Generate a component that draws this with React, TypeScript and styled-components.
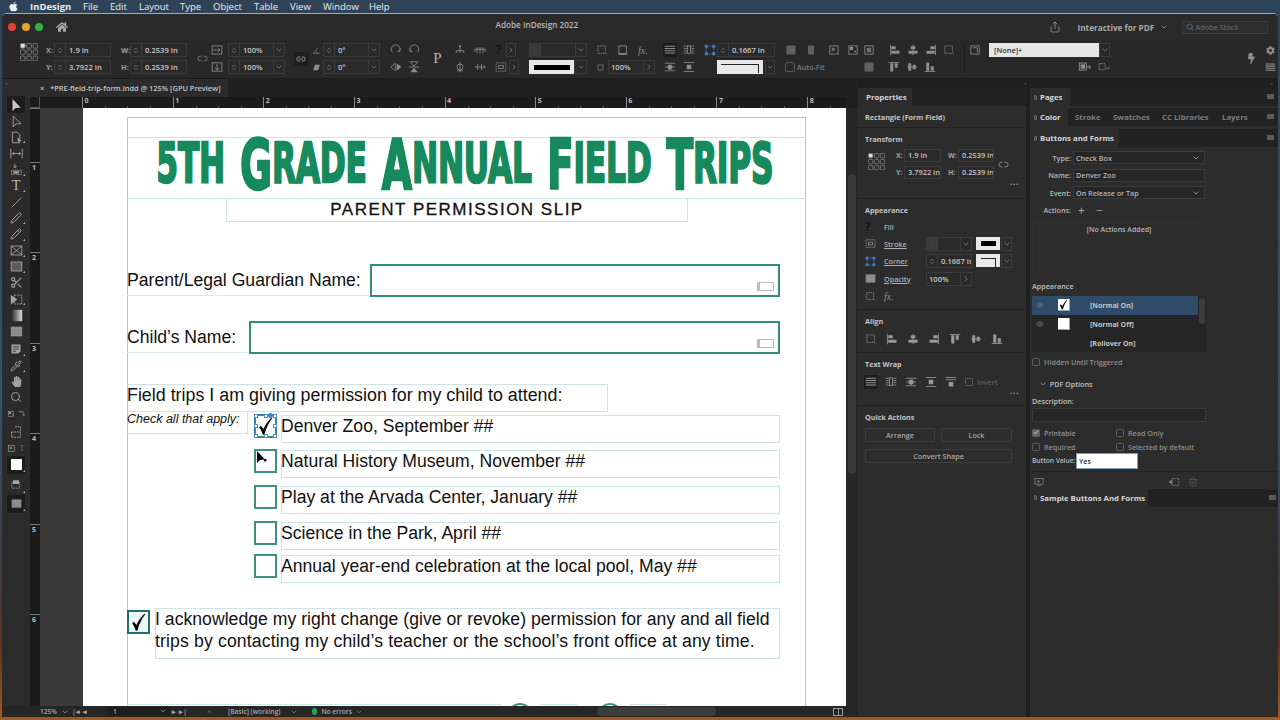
import React from "react";
import styled, { createGlobalStyle } from "styled-components";
import { FaApple, FaHome, FaCog, FaBolt, FaHandPaper } from "react-icons/fa";
import { Scissors, Pipette, Search, Pen, Pencil, Share, Eye, Trash2, ChevronDown, ChevronRight, ChevronUp, Unlink2, Link2, Check as TickMark } from "lucide-react";

const GlobalStyle = createGlobalStyle`
    html, body { margin: 0; padding: 0; width: 1280px; height: 720px; overflow: hidden; }
    body {
        font-family: "Open Sans", "Liberation Sans", sans-serif;
        background: linear-gradient(180deg, #2f4558 0, #33536f 400px, #3d3f4a 560px, #5a3320 640px, #a05a22 720px);
    }
    * { box-sizing: border-box; }
`;

const Screen = styled.div`
    width: 1280px;
    height: 720px;
    display: flex;
    flex-direction: column;
`;

const MenuBar = styled.div`
    height: 13px;
    display: flex;
    align-items: center;
    padding-left: 8px;
    color: #e9eef2;
    font-size: 9.5px;
    background: #2e4357;
`;

const MenuItem = styled.span<{ $w: number; $bold?: boolean }>`
    width: ${(p) => p.$w}px;
    font-weight: ${(p) => (p.$bold ? 700 : 500)};
    white-space: nowrap;
`;

const AppleMark = styled.span`
    width: 22px;
    display: flex;
    font-size: 11px;
    color: #eef2f5;
`;

const Win = styled.div`
    margin: 0 2px;
    height: 704px;
    border-top: 1px solid #8fb0c8;
    border-radius: 5px 5px 0 0;
    background: #1f1f1f;
    display: flex;
    flex-direction: column;
    overflow: hidden;
`;

const TitleBar = styled.div`
    height: 26px;
    flex: none;
    background: #2a2a2a;
    display: flex;
    align-items: center;
    position: relative;
    padding-left: 6px;
    color: #bdbdbd;
`;

const Light = styled.i<{ $c: string }>`
    width: 8px;
    height: 8px;
    border-radius: 50%;
    margin-right: 5.5px;
    background: ${(p) => p.$c};
`;

const HomeMark = styled.span`
    display: flex;
    margin-left: 7px;
    color: #a8a8a8;
    font-size: 12px;
`;

const AppName = styled.div`
    margin-left: 428px;
    margin-top: -5px;
    width: 200px;
    font-size: 8.2px;
    font-weight: 600;
    color: #b9b9b9;
`;

const ShareMark = styled.span`
    margin-left: 353px;
    display: flex;
    color: #a8a8a8;
`;

const Workspace = styled.span`
    margin-left: 17px;
    width: 90px;
    font-size: 8.2px;
    font-weight: 700;
    color: #a9a9a9;
    white-space: nowrap;
    display: flex;
    align-items: center;
    justify-content: space-between;
`;

const StockSearch = styled.div`
    margin-left: 14px;
    width: 86px;
    height: 13px;
    border: 1px solid #3a3a3a;
    background: #2e2e2e;
    display: flex;
    align-items: center;
    gap: 2px;
    padding-left: 3px;
    font-size: 7.4px;
    color: #6f6f6f;
    svg { color: #5e86b5; }
`;

const ControlBar = styled.div`
    height: 39px;
    flex: none;
    background: #282828;
    border-bottom: 1px solid #1c1c1c;
    padding: 3px 0 0 18px;
    display: flex;
    color: #8e8e8e;
`;

const Col = styled.div<{ $w: number; $mid?: boolean; $right?: boolean }>`
    width: ${(p) => p.$w}px;
    flex: none;
    display: flex;
    flex-direction: column;
    gap: 3px;
    align-items: ${(p) => (p.$right ? "flex-end" : p.$mid ? "center" : "flex-start")};
    justify-content: ${(p) => (p.$mid ? "center" : "flex-start")};
    height: 31px;
`;

const Sep = styled(Col)`
    border-right: 1px solid #1f1f1f;
`;

const Row = styled.div<{ $gap?: number; $pl?: number }>`
    height: 14px;
    display: flex;
    align-items: center;
    gap: ${(p) => p.$gap ?? 0}px;
    padding-left: ${(p) => p.$pl ?? 0}px;
`;

const FieldLabel = styled.span<{ $w: number }>`
    width: ${(p) => p.$w}px;
    font-size: 7.4px;
    font-weight: 700;
    color: #9f9f9f;
`;

const IconSlot = styled.span<{ $w: number }>`
    width: ${(p) => p.$w}px;
    flex: none;
    display: flex;
    color: #8e8e8e;
`;

const NumField = styled.div<{ $w: number; $dim?: boolean }>`
    width: ${(p) => p.$w}px;
    height: 14px;
    flex: none;
    display: flex;
    align-items: center;
    border: 1px solid #3b3b3b;
    background: #2a2a2a;
    font-size: 7.6px;
    font-weight: 600;
    color: ${(p) => (p.$dim ? "#666" : "#c6c6c6")};
    white-space: nowrap;
    overflow: hidden;
`;

const SpinBox = styled.span<{ $dim?: boolean }>`
    width: 11px;
    height: 100%;
    flex: none;
    margin-right: 3px;
    border-right: 1px solid #3b3b3b;
    display: flex;
    flex-direction: column;
    align-items: center;
    justify-content: center;
    color: ${(p) => (p.$dim ? "#4e4e4e" : "#a8a8a8")};
    background: ${(p) => (p.$dim ? "#3a3a3a" : "transparent")};
    svg { margin: -1.5px 0; }
`;

const Chev = styled.span`
    width: 11px;
    height: 100%;
    margin-left: auto;
    flex: none;
    border-left: 1px solid #3b3b3b;
    display: flex;
    align-items: center;
    justify-content: center;
    color: #8e8e8e;
`;

const Swatch = styled.div<{ $w: number; $h?: number }>`
    width: ${(p) => p.$w}px;
    height: ${(p) => p.$h ?? 14}px;
    flex: none;
    background: #e8e8e8;
    display: flex;
    align-items: center;
    justify-content: center;
`;

const BlackBar = styled.i<{ $w: number }>`
    width: ${(p) => p.$w}px;
    height: 5px;
    background: #000;
`;

const CornerMark = styled.i<{ $w: number }>`
    width: ${(p) => p.$w}px;
    height: 9px;
    border-top: 1px solid #222;
    border-right: 1px solid #222;
    margin-top: 3px;
`;

const ChevBox = styled.span<{ $w?: number }>`
    width: ${(p) => p.$w ?? 11}px;
    height: 14px;
    flex: none;
    border: 1px solid #3b3b3b;
    display: flex;
    align-items: center;
    justify-content: center;
    color: #8e8e8e;
`;

const ChainBtn = styled.span`
    width: 15px;
    height: 14px;
    background: #1e1e1e;
    border-radius: 2px;
    display: flex;
    align-items: center;
    justify-content: center;
    color: #a8a8a8;
`;

const SerifP = styled.span`
    font-family: "Liberation Serif", serif;
    font-size: 15px;
    color: #b4b4b4;
`;

const Fx = styled.span`
    font-family: "Liberation Serif", serif;
    font-style: italic;
    font-size: 10px;
    color: #8e8e8e;
`;

const Unknown = styled.span`
    font-size: 12px;
    font-weight: 700;
    color: #141414;
    line-height: 1;
`;

const Tick = styled.i`
    width: 10px;
    height: 10px;
    flex: none;
    border: 1px solid #5a5a5a;
    border-radius: 2px;
    display: block;
`;

const SmallText = styled.span<{ $c?: string }>`
    font-size: 7.2px;
    font-weight: 600;
    color: ${(p) => p.$c ?? "#7c7c7c"};
    white-space: nowrap;
`;

const StyleField = styled.div`
    width: 110px;
    height: 14px;
    background: #e6e6e6;
    color: #333;
    font-size: 7.4px;
    font-weight: 600;
    padding-left: 5px;
    display: flex;
    align-items: center;
`;

const Body = styled.div`
    flex: 1;
    min-height: 0;
    display: flex;
`;

const Left = styled.div`
    width: 856px;
    flex: none;
    display: flex;
    flex-direction: column;
`;

const LeftMain = styled.div`
    flex: 1;
    min-height: 0;
    display: flex;
`;

const ToolsCol = styled.div`
    width: 28px;
    flex: none;
    background: #2b2b2b;
    color: #a4a4a4;
    display: flex;
    flex-direction: column;
    align-items: center;
    padding-top: 8px;
    position: relative;
`;

const ToolsHandle = styled.div`
    height: 9px;
    font-size: 6px;
    color: #6c6c6c;
    letter-spacing: -1px;
    align-self: flex-start;
    padding-left: 3px;
    margin-top: -8px;
    margin-bottom: 8px;
`;

const Tool = styled.div<{ $h?: number; $active?: boolean; $corner?: boolean }>`
    width: 18px;
    height: ${(p) => p.$h ?? 16.2}px;
    flex: none;
    display: flex;
    align-items: center;
    justify-content: center;
    gap: 3px;
    position: relative;
    background: ${(p) => (p.$active ? "#1c1c1c" : "transparent")};
    &::after {
        content: "";
        display: ${(p) => (p.$corner ? "block" : "none")};
        position: absolute;
        right: 0;
        bottom: 2px;
        border-left: 2px solid transparent;
        border-bottom: 2px solid #bbb;
    }
`;

const ToolT = styled.span<{ $size?: number; $c?: string }>`
    font-family: "Liberation Serif", serif;
    font-size: ${(p) => p.$size ?? 15}px;
    color: ${(p) => p.$c ?? "#b4b4b4"};
    line-height: 1;
`;

const FillChip = styled.i`
    width: 11px;
    height: 11px;
    background: #fff;
    display: block;
`;

const DocCol = styled.div`
    flex: 1;
    min-width: 0;
    display: flex;
    flex-direction: column;
`;

const TabStrip = styled.div`
    height: 18px;
    flex: none;
    background: #202020;
    display: flex;
`;

const DocTab = styled.div`
    width: 198px;
    height: 100%;
    background: #2b2b2b;
    color: #c4c4c4;
    font-size: 7.4px;
    font-weight: 600;
    display: flex;
    align-items: center;
    gap: 6px;
    padding-left: 10px;
    white-space: nowrap;
`;

const HRuler = styled.div`
    height: 11px;
    flex: none;
    margin-right: 12px;
    background: #1b1b1b;
    display: flex;
    padding-left: 52px;
    position: relative;
    overflow: hidden;
`;

const RulerCorner = styled.span`
    position: absolute;
    left: 0;
    top: 0;
    width: 10px;
    height: 11px;
    border-right: 1px solid #555;
    border-bottom: 1px solid #555;
`;

const HCell = styled.div`
    width: 90.65px;
    flex: none;
    height: 11px;
    border-left: 1px solid #8a8a8a;
    padding-left: 1.5px;
    font-size: 7px;
    font-weight: 700;
    line-height: 8px;
    color: #bdbdbd;
    background:
        repeating-linear-gradient(90deg, transparent 0, transparent 21.7px, #555 21.7px, #555 22.7px) 0 100% / 100% 2px no-repeat;
`;

const DocMain = styled.div`
    flex: 1;
    min-height: 0;
    display: flex;
`;

const VRuler = styled.div`
    width: 10px;
    flex: none;
    background: #1b1b1b;
    overflow: hidden;
    margin-top: 0;
`;

const VCell = styled.div<{ $first?: boolean }>`
    height: ${(p) => (p.$first ? 54 : 90.4)}px;
    border-top: 1px solid #777;
    padding-left: 2px;
    font-size: 7px;
    font-weight: 700;
    line-height: 10px;
    color: #bdbdbd;
`;

const Pasteboard = styled.div`
    width: 43px;
    flex: none;
    background: #3a3a3a;
`;

const Sheet = styled.div`
    width: 763px;
    flex: none;
    background: #fff;
    padding: 9px 0 0 44px;
    overflow: hidden;
    color: #111;
    font-family: "Liberation Sans", Arial, sans-serif;
`;

const Margins = styled.div`
    display: flow-root;
    width: 679px;
    min-height: 640px;
    box-shadow: inset 1px 1px 0 #d9aee4, inset -1px 0 0 #d9aee4;
`;

const TitleFrame = styled.div`
    margin-top: 20px;
    height: 62px;
    border-top: 1px solid #cfe3ea;
    border-bottom: 1px solid #cfe3ea;
    display: flex;
    justify-content: center;
    align-items: center;
`;

const Title = styled.div`
    font-family: "DejaVu Sans", sans-serif;
    font-weight: 700;
    color: #168a5c;
    font-size: 56px;
    line-height: 62px;
    white-space: nowrap;
    transform: translate(-2px, -5px) scaleX(0.56);
    -webkit-text-stroke: 2.4px #168a5c;
    letter-spacing: -0.5px;
    word-spacing: 8px;
`;

const BigCap = styled.span`
    font-size: 70px;
    line-height: 0;
    vertical-align: -7px;
`;

const SubFrame = styled.div`
    margin-left: 99px;
    width: 462px;
    height: 23px;
    border: 1px solid #cfe3ea;
    border-top: 0;
    text-align: center;
    font-size: 17px;
    line-height: 21px;
    letter-spacing: 1.5px;
    -webkit-text-stroke: 0.3px #111;
`;

const FormRow = styled.div<{ $mt: number }>`
    margin-top: ${(p) => p.$mt}px;
    display: flex;
    align-items: flex-start;
`;

const LabelFrame = styled.div<{ $w: number; $h?: number; $size?: number }>`
    width: ${(p) => p.$w}px;
    height: ${(p) => p.$h ?? 32}px;
    flex: none;
    font-size: ${(p) => p.$size ?? 17.6}px;
    line-height: ${(p) => p.$h ?? 32}px;
    white-space: nowrap;
    border-bottom: 1px solid #dbeaef;
`;

const TextField = styled.div<{ $w: number }>`
    width: ${(p) => p.$w}px;
    height: 33px;
    flex: none;
    border: 2px solid #2f8f7b;
    position: relative;
    &::after {
        content: "";
        position: absolute;
        right: 4px;
        bottom: 4px;
        width: 13px;
        height: 7px;
        border: 1px solid #bbb;
        border-left-width: 3px;
    }
`;

const TripsHeading = styled.div`
    margin-top: 30px;
    width: 481px;
    height: 28px;
    border: 1px solid #cfe3ea;
    border-left: 0;
    font-size: 17.85px;
    line-height: 21px;
    white-space: nowrap;
`;

const ChecksArea = styled.div`
    display: flex;
`;

const CheckHint = styled.div`
    width: 121px;
    height: 22px;
    margin-right: 6px;
    flex: none;
    border: 1px solid #cfe3ea;
    border-width: 0 1px 1px 0;
    font-size: 12.5px;
    line-height: 14px;
    font-style: italic;
    white-space: nowrap;
`;

const ChecksList = styled.div`
    display: flex;
    flex-direction: column;
    margin-top: 2px;
`;

const CheckRow = styled.div<{ $h: number }>`
    height: ${(p) => p.$h}px;
    display: flex;
    gap: 4px;
    align-items: flex-start;
`;

const Box = styled.div`
    width: 23px;
    height: 24px;
    flex: none;
    border: 2px solid #3d8f80;
    position: relative;
    display: flex;
    align-items: center;
    justify-content: center;
`;

const Selection = styled.div`
    position: absolute;
    inset: -2px -2px -2px -2px;
    border: 1px dashed #2b6fb3;
`;

const Handle = styled.i<{ $x: string; $y: string }>`
    position: absolute;
    left: ${(p) => p.$x};
    top: ${(p) => p.$y};
    width: 4px;
    height: 4px;
    margin: -2px;
    background: #fff;
    border: 1px solid #4d8fd0;
`;

const HandleDot = styled.i`
    position: absolute;
    right: 2px;
    top: -3px;
    width: 5px;
    height: 5px;
    border-radius: 50%;
    background: #3d83d4;
`;

const CursorMark = styled.svg`
    position: absolute;
    left: 0;
    top: -1px;
`;

const OptionFrame = styled.div`
    width: 499px;
    height: 28px;
    flex: none;
    margin-top: 1px;
    border: 1px solid #cfe3ea;
    border-left-width: 0;
    box-shadow: inset 1px 0 0 #cfe3ea;
    font-size: 17.6px;
    line-height: 20px;
    white-space: nowrap;
`;

const AckRow = styled.div`
    margin-top: 25px;
    display: flex;
    gap: 5px;
`;

const AckBox = styled(Box)`
    margin-top: 2px;
    border-color: #1f6f6a;
    background: #eef6f5;
`;

const AckFrame = styled.div`
    width: 625px;
    height: 51px;
    border: 1px solid #cfe3ea;
    border-left-width: 0;
    box-shadow: inset 1px 0 0 #cfe3ea;
    font-size: 17.6px;
    line-height: 21.5px;
`;

const AckLine = styled.div<{ $ls: number }>`
    letter-spacing: ${(p) => p.$ls}px;
    white-space: nowrap;
`;

const SigRow = styled.div`
    margin-top: 45px;
    display: flex;
    height: 30px;
`;

const SigLine = styled.div`
    width: 375px;
    border-top: 1px solid #cfe3ea;
`;

const SigCircle = styled.div`
    width: 24px;
    height: 24px;
    flex: none;
    margin: -1px 0 0 6px;
    border: 2px solid #2f8f7b;
    border-radius: 50%;
`;

const SigBox = styled.div`
    width: 37px;
    margin: 0 15px 0 8px;
    border-top: 1px solid #cfe3ea;
`;

const VScroll = styled.div`
    width: 12px;
    flex: none;
    background: #262626;
    padding: 66px 2px 250px;
`;

const ScrollThumb = styled.div`
    width: 8px;
    height: 300px;
    border-radius: 4px;
    background: #3a3a3a;
`;

const StatusBar = styled.div`
    height: 11px;
    flex: none;
    background: #262626;
    display: flex;
    align-items: center;
    padding-left: 38px;
    font-size: 6.6px;
    font-weight: 600;
    color: #a6a6a6;
    white-space: nowrap;
`;

const StatusSlot = styled.span<{ $w: number }>`
    width: ${(p) => p.$w}px;
    flex: none;
    display: flex;
    align-items: center;
    gap: 4px;
`;

const StatusPage = styled.span`
    width: 62px;
    flex: none;
    height: 9px;
    background: #1e1e1e;
    padding-left: 5px;
    line-height: 9px;
    display: flex;
    justify-content: space-between;
    padding-right: 3px;
`;

const GreenDot = styled.i`
    width: 7px;
    height: 7px;
    border-radius: 50%;
    background: #27a844;
`;

const HThumb = styled.div`
    width: 119px;
    height: 9px;
    flex: none;
    border-radius: 4px;
    background: #3c3c3c;
`;

const SpreadMark = styled.span`
    width: 10px;
    height: 8px;
    flex: none;
    border: 1px solid #9a9a9a;
    margin-left: 117px;
    position: relative;
    &::after {
        content: "";
        position: absolute;
        left: 3.5px;
        top: 0;
        bottom: 0;
        border-left: 1px solid #9a9a9a;
    }
`;

const Dock = styled.div`
    flex: 1;
    background: #1e1e1e;
    display: flex;
    flex-direction: column;
`;

const DockHandle = styled.div`
    height: 9px;
    flex: none;
    font-size: 6px;
    color: #6c6c6c;
    letter-spacing: -1px;
    line-height: 9px;
    display: flex;
    padding-left: 166px;
    justify-content: space-between;
    padding-right: 6px;
`;

const DockCols = styled.div`
    flex: 1;
    min-height: 0;
    display: flex;
    gap: 4px;
`;

const PanelCol = styled.div<{ $w?: number }>`
    width: ${(p) => (p.$w ? `${p.$w}px` : "auto")};
    flex: ${(p) => (p.$w ? "none" : "1")};
    display: flex;
    flex-direction: column;
    background: #2c2c2c;
`;

const PanelTabs = styled.div<{ $mb?: number }>`
    height: 18px;
    flex: none;
    background: #222;
    margin-bottom: ${(p) => p.$mb ?? 0}px;
    display: flex;
    align-items: center;
    font-size: 7.8px;
    font-weight: 700;
    color: #7d7d7d;
    position: relative;
`;

const PanelTab = styled.div<{ $w: number; $on?: boolean; $ml?: number }>`
    width: ${(p) => p.$w}px;
    flex: none;
    height: 100%;
    margin-left: ${(p) => p.$ml ?? 0}px;
    display: flex;
    align-items: center;
    padding-left: ${(p) => (p.$on ? 4 : 0)}px;
    gap: 3px;
    white-space: nowrap;
    background: ${(p) => (p.$on ? "#2c2c2c" : "transparent")};
    color: ${(p) => (p.$on ? "#d6d6d6" : "#7d7d7d")};
`;

const GripDot = styled.i`
    width: 3px;
    height: 5px;
    border: 1px solid #777;
    border-radius: 50%;
    flex: none;
`;

const PanelMenu = styled.span`
    position: absolute;
    right: 4px;
    top: 6px;
    width: 7px;
    height: 5px;
    background: #5b5b5b;
`;

const PropTab = styled(PanelTab)`
    padding-left: 8px;
`;

const Section = styled.div<{ $h: number; $last?: boolean }>`
    height: ${(p) => p.$h}px;
    flex: none;
    padding: 6px 7px 0;
    border-bottom: ${(p) => (p.$last ? "0" : "1px solid #232323")};
    position: relative;
`;

const SectionTitle = styled.div`
    font-size: 7.2px;
    font-weight: 700;
    color: #c4c4c4;
    height: 10px;
    line-height: 10px;
`;

const ShapeName = styled(SectionTitle)`
    padding-top: 0;
`;

const TransformGrid = styled.div`
    display: grid;
    grid-template-columns: 28px 8px 37px 17px 36px 16px;
    grid-auto-rows: 13px;
    row-gap: 4px;
    align-items: center;
    margin: 5px 0 0 0;
    padding-left: 3px;
`;

const ProxyCell = styled.div`
    grid-row: span 2;
`;

const PlainField = styled.div`
    height: 13px;
    border: 1px solid #3b3b3b;
    background: #2a2a2a;
    font-size: 7.4px;
    font-weight: 600;
    color: #c2c2c2;
    padding-left: 3px;
    line-height: 11px;
    white-space: nowrap;
    overflow: hidden;
`;

const TLabel = styled.span`
    font-size: 7px;
    font-weight: 700;
    color: #a5a5a5;
`;

const TLabelW = styled(TLabel)`
    padding-left: 7px;
`;

const LinkCell = styled.div`
    grid-column: 6;
    grid-row: 1 / span 2;
    padding-left: 4px;
    color: #8e8e8e;
    display: flex;
`;

const More = styled.div`
    position: absolute;
    right: 7px;
    font-size: 9px;
    font-weight: 700;
    letter-spacing: 0.5px;
    line-height: 5px;
    color: #9a9a9a;
`;

const PropRows = styled.div`
    margin-top: 3px;
`;

const PropRow = styled.div<{ $h: number }>`
    height: ${(p) => p.$h}px;
    display: flex;
    align-items: center;
`;

const PropIcon = styled.span`
    width: 19px;
    flex: none;
    display: flex;
    color: #9a9a9a;
    padding-left: 0;
`;

const PropLink = styled.span<{ $plain?: boolean }>`
    width: 42px;
    flex: none;
    font-size: 7.2px;
    font-weight: 600;
    color: #b0b0b0;
    text-decoration: ${(p) => (p.$plain ? "none" : "underline")};
`;

const SwatchGroup = styled.div`
    margin-left: 4px;
    display: flex;
    gap: 1px;
`;

const AlignRow = styled.div<{ $gap: number }>`
    display: flex;
    align-items: center;
    margin-top: 7px;
    gap: ${(p) => p.$gap}px;
    color: #999;
`;

const WrapOn = styled.span`
    background: #1c1c1c;
    display: flex;
    padding: 1px;
    margin: -1px;
`;

const ActionBtns = styled.div`
    margin-top: 6px;
    display: grid;
    grid-template-columns: 70px 71px;
    column-gap: 6px;
    row-gap: 7px;
    padding-right: 0;
`;

const ActionBtn = styled.div<{ $wide?: boolean }>`
    grid-column: ${(p) => (p.$wide ? "1 / span 2" : "auto")};
    height: 14px;
    border: 1px solid #3e3e3e;
    border-radius: 2px;
    text-align: center;
    font-size: 7.2px;
    font-weight: 600;
    line-height: 12px;
    color: #a8a8a8;
`;

const FormsBody = styled.div`
    padding: 4px 0 0 2px;
    width: 176px;
    flex: 1;
`;

const KV = styled.div`
    height: 13px;
    margin-bottom: 4.5px;
    display: flex;
    align-items: center;
`;

const KVLabel = styled.span`
    width: 41px;
    margin-right: 0;
    text-align: right;
    padding-right: 2px;
    font-size: 7.2px;
    font-weight: 600;
    color: #b6b6b6;
    flex: none;
`;

const KVField = styled.div`
    width: 132px;
    height: 13px;
    border: 1px solid #3b3b3b;
    background: #262626;
    padding: 0 4px 0 2px;
    font-size: 7.2px;
    font-weight: 600;
    color: #b4b4b4;
    display: flex;
    align-items: center;
    justify-content: space-between;
`;

const ActionsRow = styled(KV)`
    margin-bottom: 5px;
    color: #a8a8a8;
`;

const ActionSigns = styled.span`
    display: flex;
    gap: 11px;
    padding-left: 5px;
    font-size: 12px;
    line-height: 13px;
`;

const ActionsBox = styled.div`
    width: 174px;
    height: 53px;
    border: 1px solid #2f2f2f;
    text-align: center;
    font-size: 7px;
    font-weight: 600;
    line-height: 14px;
    color: #b6b6b6;
`;

const GroupLabel = styled.div<{ $mt: number; $mb: number }>`
    margin-top: ${(p) => p.$mt}px;
    margin-bottom: ${(p) => p.$mb}px;
    height: 10px;
    line-height: 10px;
    font-size: 7.2px;
    font-weight: 600;
    color: #c0c0c0;
    display: flex;
    align-items: center;
    gap: 3px;
`;

const StateList = styled.div`
    width: 174px;
    height: 56px;
    background: #252525;
    position: relative;
    overflow: hidden;
`;

const StateRow = styled.div<{ $on?: boolean }>`
    height: 19px;
    display: flex;
    align-items: center;
    padding-left: 4px;
    font-size: 7px;
    font-weight: 700;
    color: #c4c4c4;
    background: ${(p) => (p.$on ? "#2f4b68" : "transparent")};
    width: 166px;
`;

const EyeSlot = styled.span`
    width: 22px;
    display: flex;
    color: #6f7f8c;
`;

const StateChip = styled.span<{ $blank?: boolean }>`
    width: 12px;
    height: 12px;
    margin-right: 20px;
    flex: none;
    background: ${(p) => (p.$blank ? "transparent" : "#fff")};
    border-right: ${(p) => (p.$blank ? "0" : "1px solid #7fb0a8")};
    border-bottom: ${(p) => (p.$blank ? "0" : "1px solid #7fb0a8")};
    display: flex;
    align-items: center;
    justify-content: center;
`;

const StateScroll = styled.div`
    position: absolute;
    right: 1px;
    top: 2px;
    width: 6px;
    height: 26px;
    border-radius: 3px;
    background: #3d3d3d;
`;

const CheckLine = styled.div<{ $mt: number }>`
    margin-top: ${(p) => p.$mt}px;
    height: 10px;
    display: flex;
    align-items: center;
    gap: 4px;
    font-size: 7.2px;
    font-weight: 600;
    color: #8d8d8d;
`;

const MiniBox = styled.i<{ $on?: boolean }>`
    width: 8px;
    height: 8px;
    flex: none;
    display: flex;
    align-items: center;
    justify-content: center;
    border: 1px solid #5e5e5e;
    border-radius: 1.5px;
    color: #ddd;
    background: ${(p) => (p.$on ? "#6a6a6a" : "transparent")};
`;

const CheckCell = styled.span<{ $w: number }>`
    width: ${(p) => p.$w}px;
    display: flex;
    align-items: center;
    gap: 4px;
    flex: none;
`;

const DescField = styled.div`
    width: 174px;
    height: 14px;
    border: 1px solid #3b3b3b;
    background: #262626;
`;

const ValueRow = styled.div`
    margin-top: 2px;
    height: 14px;
    display: flex;
    align-items: center;
    font-size: 6.6px;
    font-weight: 600;
    color: #bcbcbc;
`;

const ValueLabel = styled.span`
    width: 45px;
    flex: none;
    white-space: nowrap;
`;

const ValueInput = styled.div`
    width: 60px;
    height: 14px;
    background: #fff;
    box-shadow: 0 0 0 1px #7a9cc0;
    color: #333;
    font-size: 7.2px;
    line-height: 14px;
    padding-left: 2px;
`;

const FootBar = styled.div`
    margin: 3px 0 0 -2px;
    width: 250px;
    height: 18px;
    border-top: 1px solid #262626;
    padding: 3px 0 0 4px;
    display: flex;
    align-items: center;
    color: #8e8e8e;
    gap: 0;
`;

const FootIcon = styled.span<{ $ml?: number }>`
    margin-left: ${(p) => p.$ml ?? 0}px;
    display: flex;
`;

const SamplePanel = styled(PanelTabs)`
    margin-left: -2px;
    width: 250px;
`;

type IconName =
    | "rotR" | "rotL" | "flipH" | "flipV" | "scaleX" | "scaleY" | "angle" | "shear"
    | "orgA" | "orgB" | "orgC" | "orgD" | "strokeBox" | "frame" | "shadow" | "square"
    | "wrap0" | "wrap1" | "wrap2" | "wrap3" | "wrap4" | "corners" | "fit1" | "fit2" | "fit3" | "fit4" | "fit5"
    | "alignL" | "alignC" | "alignR" | "alignT" | "alignM" | "alignB" | "dist"
    | "arrow" | "arrowO" | "page" | "gap" | "collect" | "line" | "boxX" | "rect" | "free" | "grad" | "feather" | "note"
    | "swap" | "view" | "play" | "screen" | "swatchA" | "swatchB" | "preview" | "noteGrid";

const filled = { fill: "currentColor", stroke: "none" };

const shapes: Record<IconName, React.ReactNode> = {
    rotR: <><path d="M3 11a6 6 0 1 1 10-1" /><path d="M13 6v4h-3" /></>,
    rotL: <><path d="M13 11a6 6 0 1 0-10-1" /><path d="M3 6v4h3" /></>,
    flipH: <><path d="M7 3L1 8l6 5z" /><path d="M9 3l6 5-6 5z" {...filled} /></>,
    flipV: <><path d="M3 1h10L8 7z" /><path d="M3 15h10L8 9z" {...filled} /><path d="M1 8h14" /></>,
    scaleX: <><rect x="1.5" y="2.5" width="13" height="11" /><path d="M3 8h9M9 5l3 3-3 3" /></>,
    scaleY: <><rect x="1.5" y="2.5" width="13" height="11" /><path d="M8 4v8M5 9l3 3 3-3" /></>,
    angle: <path d="M2 13h12M2 13L10 3M7 8l3 5" />,
    shear: <path d="M5 3h9l-3 10H2z" {...filled} />,
    orgA: <><circle cx="8" cy="3" r="1.5" {...filled} /><path d="M8 4v8M3 9h10M3 9v3M13 9v3" /></>,
    orgB: <path d="M1 10V7h14v3M4 7V4M8 7V4M12 7V4M4 7v5M8 7v5M12 7v5" />,
    orgC: <><circle cx="8" cy="8" r="4" /><path d="M8 1v14M4 13h8" /></>,
    orgD: <path d="M1 8h14M5 4v8M10 4v8M13 6l2 2-2 2" />,
    strokeBox: <><rect x="1.5" y="2.5" width="13" height="11" strokeDasharray="2 1" /><rect x="5" y="6" width="6" height="4" /></>,
    frame: <><rect x="2.5" y="2.5" width="10" height="10" strokeDasharray="2 1" /><path d="M14 13h1" /></>,
    shadow: <><rect x="2.5" y="2.5" width="10" height="10" /><path d="M2 14h12" /></>,
    square: <rect x="3.5" y="3.5" width="9" height="9" />,
    wrap0: <path d="M1 3h14M1 6h14M1 9h14M1 12h14" strokeWidth="1.5" />,
    wrap1: <><path d="M1 3h4M1 6h4M1 9h4M1 12h4M11 3h4M11 6h4M11 9h4M11 12h4" /><rect x="6" y="2.5" width="4" height="10" /></>,
    wrap2: <><path d="M1 3h14M1 13h14M1 8h3M12 8h3" /><circle cx="8" cy="8" r="3.5" {...filled} /></>,
    wrap3: <><path d="M1 2h14M1 14h14" /><rect x="5" y="5" width="6" height="6" {...filled} /></>,
    wrap4: <><path d="M1 2h14M1 5h14" /><rect x="5" y="8" width="6" height="6" {...filled} /></>,
    corners: <><rect x="3" y="3" width="10" height="10" stroke="#3f7fc0" strokeDasharray="3 1" /><path d="M1 1h4v4H1zM11 1h4v4h-4zM1 11h4v4H1zM11 11h4v4h-4z" fill="#3f7fc0" stroke="none" /></>,
    fit1: <path d="M2 2h12v12H2z" {...filled} opacity=".55" />,
    fit2: <path d="M4 2h8v12H4z" {...filled} opacity=".55" />,
    fit3: <><rect x="2.5" y="2.5" width="11" height="11" /><rect x="5" y="5" width="4" height="4" {...filled} opacity=".7" /></>,
    fit4: <><rect x="2.5" y="2.5" width="11" height="11" /><rect x="4" y="4" width="4" height="4" {...filled} /><rect x="10" y="9" width="2" height="2" {...filled} /></>,
    fit5: <><rect x="2.5" y="2.5" width="11" height="11" /><rect x="5" y="5" width="6" height="6" {...filled} opacity=".7" /></>,
    alignL: <><path d="M2 1v14" /><rect x="3" y="3" width="6" height="4" {...filled} /><rect x="3" y="9" width="11" height="4" {...filled} /></>,
    alignC: <><path d="M8 1v14" /><rect x="5" y="3" width="6" height="4" {...filled} /><rect x="2" y="9" width="12" height="4" {...filled} /></>,
    alignR: <><path d="M14 1v14" /><rect x="7" y="3" width="6" height="4" {...filled} /><rect x="2" y="9" width="11" height="4" {...filled} /></>,
    alignT: <><path d="M1 2h14" /><rect x="3" y="3" width="4" height="11" {...filled} /><rect x="9" y="3" width="4" height="6" {...filled} /></>,
    alignM: <><path d="M1 8h14" /><rect x="3" y="3" width="4" height="10" {...filled} /><rect x="9" y="5" width="4" height="6" {...filled} /></>,
    alignB: <><path d="M1 14h14" /><rect x="3" y="2" width="4" height="11" {...filled} /><rect x="9" y="7" width="4" height="6" {...filled} /></>,
    dist: <><rect x="2.5" y="2.5" width="10" height="10" strokeDasharray="2 1" /><path d="M13 14l2 0-1 1z" {...filled} /></>,
    arrow: <path d="M4 1v14l3.5-3.5 6-.5z" fill="#c8c8c8" stroke="none" />,
    arrowO: <path d="M4 1.5v13l3.5-3.5 6-.5z" />,
    page: <><path d="M3 1.5h6l3 3v10H3z" /><path d="M9 8l5 4-3 .5-1 2z" {...filled} /></>,
    gap: <path d="M1 2v12M15 2v12M3 8h10M5 6L3 8l2 2M11 6l2 2-2 2" />,
    collect: <><path d="M2 14V9h12v5z" strokeDasharray="2 1" /><path d="M6 1v5M4 4l2 2 2-2" /><rect x="4" y="10" width="7" height="3" {...filled} /></>,
    line: <path d="M2 14L14 2" />,
    boxX: <><rect x="1.5" y="2.5" width="13" height="11" /><path d="M1.5 2.5l13 11M14.5 2.5l-13 11" /></>,
    rect: <rect x="1.5" y="2.5" width="13" height="11" fill="#5a5a5a" />,
    free: <><path d="M1 2l8 6-8 6z" {...filled} /><rect x="5.5" y="2.5" width="9" height="11" strokeDasharray="2 1" /></>,
    grad: <><defs><linearGradient id="g1"><stop offset="0" stopColor="#222" /><stop offset="1" stopColor="#ddd" /></linearGradient></defs><rect x="1" y="1" width="14" height="14" fill="url(#g1)" stroke="none" /></>,
    feather: <><defs><pattern id="p1" width="4" height="4" patternUnits="userSpaceOnUse"><rect width="4" height="4" fill="#666" /><rect width="2" height="2" fill="#333" /></pattern></defs><rect x="1" y="2" width="14" height="12" fill="url(#p1)" stroke="none" /></>,
    note: <><path d="M2 2h12v9l-3 3H2z" {...filled} /><path d="M4 5h8M4 8h8M4 11h4" stroke="#2b2b2b" /></>,
    swap: <path d="M3 4h7a3 3 0 0 1 3 3v5M11 10l2 3 2-3M5 2L3 4l2 2" strokeWidth="1.4" />,
    view: <><rect x="2.5" y="5.5" width="10" height="8" strokeDasharray="2 1" /><rect x="4" y="3" width="8" height="5" {...filled} /></>,
    play: <><rect x="1.5" y="2.5" width="13" height="9" /><path d="M6 5l4 2-4 2z" {...filled} /><path d="M5 14h6" /></>,
    screen: <><path d="M1 8l4-3v6z" {...filled} /><rect x="5.5" y="3.5" width="9" height="9" strokeDasharray="2 1" /></>,
    swatchA: <><rect x="1.5" y="3.5" width="8" height="8" /><rect x="3" y="5" width="5" height="5" {...filled} /><path d="M10 8h4l-1-2M14 8l-1 2" /></>,
    swatchB: <><rect x="1.5" y="3.5" width="8" height="8" strokeDasharray="2 1" /><path d="M11 9l2 2 2-3" /></>,
    preview: <><rect x="2.5" y="2.5" width="11" height="11" /><path d="M5 5h6v6" /></>,
    noteGrid: <><path d="M7 2h6v6" strokeDasharray="2 1" /><rect x="3" y="8" width="10" height="6" strokeDasharray="2 1" /></>,
};

const Icon = ({ n, s = 12 }: { n: IconName; s?: number }) => (
    <svg width={s} height={s} viewBox="0 0 16 16" fill="none" stroke="currentColor" strokeWidth="1.1">
        {shapes[n]}
    </svg>
);

const ProxyGrid = ({ s = 18 }: { s?: number }) => (
    <svg width={s} height={s} viewBox="0 0 18 18">
        {[0, 6.3, 12.6].map((y) =>
            [0, 6.3, 12.6].map((x) =>
                <rect key={`${x}-${y}`} x={x + 0.5} y={y + 0.5} width="4.6" height="4.6" rx="1" fill={x + y === 0 ? "#ddd" : "none"} stroke="#777" />
            )
        )}
    </svg>
);

const Check = ({ s = 24 }: { s?: number }) => (
    <svg width={s} height={s} viewBox="0 0 24 24">
        <path d="M4 13.5l2.2-1.8 3.2 4.2C12 10 15 5.5 19.5 1.5l1 .8C16 8 13 14.5 10.5 23H8.6C7.6 19.5 6 16.5 4 13.5z" fill="#000" />
    </svg>
);

const Spin = ({ dim }: { dim?: boolean }) => (
    <SpinBox $dim={dim}>
        <ChevronUp size={6} strokeWidth={2} />
        <ChevronDown size={6} strokeWidth={2} />
    </SpinBox>
);

const ChevD = () => <ChevronDown size={8} strokeWidth={2} />;
const ChevR = () => <ChevronRight size={8} strokeWidth={2} />;

const Num = ({ w = 57, v, menu }: { w?: number; v: string; menu?: boolean }) => (
    <NumField $w={w}>
        <Spin />
        {v}
        {menu && <Chev><ChevD /></Chev>}
    </NumField>
);

const HANDLES: [string, string][] = [
    ["0", "0"], ["50%", "0"], ["100%", "0"], ["0", "50%"], ["100%", "50%"], ["0", "100%"], ["50%", "100%"], ["100%", "100%"],
];

const menus: [string, number][] = [
    ["File", 27], ["Edit", 29], ["Layout", 41], ["Type", 33], ["Object", 41], ["Table", 36], ["View", 33], ["Window", 46], ["Help", 30],
];

const App = () => (
    <Screen>
        <GlobalStyle />
        <MenuBar>
            <AppleMark><FaApple /></AppleMark>
            <MenuItem $w={53} $bold>InDesign</MenuItem>
            {menus.map(([m, w]) => <MenuItem key={m} $w={w}>{m}</MenuItem>)}
        </MenuBar>
        <Win>
            <TitleBar>
                <Light $c="#e0443e" />
                <Light $c="#e5a52c" />
                <Light $c="#2fb344" />
                <HomeMark><FaHome /></HomeMark>
                <AppName>Adobe InDesign 2022</AppName>
                <ShareMark><Share size={12} strokeWidth={1.4} /></ShareMark>
                <Workspace>Interactive for PDF <ChevD /></Workspace>
                <StockSearch><Search size={8} strokeWidth={2} />Adobe Stock</StockSearch>
            </TitleBar>
            <ControlBar>
                <Col $w={26}><ProxyGrid /></Col>
                <Col $w={75}>
                    <Row><FieldLabel $w={8}>X:</FieldLabel><Num v="1.9 in" /></Row>
                    <Row><FieldLabel $w={8}>Y:</FieldLabel><Num v="3.7922 in" /></Row>
                </Col>
                <Col $w={72}>
                    <Row><FieldLabel $w={9}>W:</FieldLabel><Num v="0.2539 in" /></Row>
                    <Row><FieldLabel $w={9}>H:</FieldLabel><Num v="0.2539 in" /></Row>
                </Col>
                <Col $w={18} $mid><Unlink2 size={11} strokeWidth={1.5} /></Col>
                <Col $w={79}>
                    <Row><IconSlot $w={17}><Icon n="scaleX" /></IconSlot><Num v="100%" menu /></Row>
                    <Row><IconSlot $w={17}><Icon n="scaleY" /></IconSlot><Num v="100%" menu /></Row>
                </Col>
                <Col $w={22} $mid><ChainBtn><Link2 size={10} /></ChainBtn></Col>
                <Col $w={73}>
                    <Row><IconSlot $w={11}><Icon n="angle" s={9} /></IconSlot><Num v="0°" menu /></Row>
                    <Row><IconSlot $w={11}><Icon n="shear" s={9} /></IconSlot><Num v="0°" menu /></Row>
                </Col>
                <Col $w={40}>
                    <Row $pl={5} $gap={6}><Icon n="rotR" /><Icon n="rotL" /></Row>
                    <Row $pl={5} $gap={6}><Icon n="flipH" /><Icon n="flipV" /></Row>
                </Col>
                <Col $w={25} $mid><SerifP>P</SerifP></Col>
                <Col $w={40}>
                    <Row $pl={4} $gap={8}><Icon n="orgA" /><Icon n="orgB" /></Row>
                    <Row $pl={4} $gap={8}><Icon n="orgC" /><Icon n="orgD" /></Row>
                </Col>
                <Col $w={34}>
                    <Row $pl={6} $gap={4}><Unknown>?</Unknown><ChevBox $w={10}><ChevR /></ChevBox></Row>
                    <Row $pl={5} $gap={2}><Icon n="strokeBox" /><ChevBox $w={10}><ChevR /></ChevBox></Row>
                </Col>
                <Col $w={68}>
                    <Row $pl={5}><NumField $w={58} $dim><Spin dim /><Chev><ChevD /></Chev></NumField></Row>
                    <Row $pl={5}><Swatch $w={45}><BlackBar $w={36} /></Swatch><ChevBox $w={13}><ChevD /></ChevBox></Row>
                </Col>
                <Col $w={68}>
                    <Row $pl={4} $gap={9}><Icon n="frame" /><Icon n="shadow" /><Fx>fx.</Fx></Row>
                    <Row $pl={4} $gap={3}><Icon n="square" s={9} /><NumField $w={47}><span>&nbsp;100%</span><Chev><ChevR /></Chev></NumField></Row>
                </Col>
                <Col $w={40}>
                    <Row $pl={4} $gap={7}><WrapOn><Icon n="wrap0" /></WrapOn><Icon n="wrap1" /></Row>
                    <Row $pl={4} $gap={7}><Icon n="wrap2" /><Icon n="wrap3" /></Row>
                </Col>
                <Col $w={80}>
                    <Row $pl={4}><IconSlot $w={13}><Icon n="corners" /></IconSlot><Num w={58} v="0.1667 in" /></Row>
                    <Row $pl={17} $gap={2}><Swatch $w={46}><CornerMark $w={38} /></Swatch><ChevBox $w={10}><ChevD /></ChevBox></Row>
                </Col>
                <Col $w={48}>
                    <Row $pl={5} $gap={8}><Icon n="fit1" /><Icon n="fit2" /></Row>
                    <Row $pl={5} $gap={2}><Tick /><SmallText>Auto-Fit</SmallText></Row>
                </Col>
                <Col $w={35}>
                    <Row $gap={7}><Icon n="fit3" /><Icon n="fit4" /></Row>
                </Col>
                <Col $w={22}>
                    <Row><Icon n="fit5" /></Row>
                    <Row><Icon n="fit1" /></Row>
                </Col>
                <Sep $w={80}>
                    <Row $pl={4} $gap={6}><Icon n="alignL" /><Icon n="alignC" /><Icon n="alignR" /><Icon n="dist" /></Row>
                    <Row $pl={3} $gap={6}><Icon n="alignT" /><Icon n="alignM" /><Icon n="alignB" /></Row>
                </Sep>
                <Col $w={23}><Row $pl={4}><Icon n="preview" /></Row></Col>
                <Col $w={122} $right>
                    <Row><StyleField>[None]+</StyleField><ChevBox $w={11}><ChevD /></ChevBox></Row>
                    <Row $gap={6}><Icon n="swatchA" s={14} /><Icon n="swatchB" s={12} /></Row>
                </Col>
                <Col $w={132} />
                <Col $w={18} $mid><FaBolt size={11} /></Col>
                <Col $w={20} $mid>
                    <Row><FaCog size={9} /></Row>
                    <Row><Icon n="wrap0" s={11} /></Row>
                </Col>
            </ControlBar>
            <Body>
                <Left>
                    <LeftMain>
                        <ToolsCol>
                            <ToolsHandle>»</ToolsHandle>
                            <Tool $h={17} $active><Icon n="arrow" s={14} /></Tool>
                            <Tool><Icon n="arrowO" s={13} /></Tool>
                            <Tool $corner><Icon n="page" s={13} /></Tool>
                            <Tool><Icon n="gap" s={13} /></Tool>
                            <Tool $corner><Icon n="collect" s={13} /></Tool>
                            <Tool $corner><ToolT>T</ToolT></Tool>
                            <Tool><Icon n="line" s={13} /></Tool>
                            <Tool $corner><Pen size={12} /></Tool>
                            <Tool $corner><Pencil size={12} /></Tool>
                            <Tool $corner><Icon n="boxX" s={13} /></Tool>
                            <Tool $corner><Icon n="rect" s={13} /></Tool>
                            <Tool><Scissors size={13} /></Tool>
                            <Tool $corner><Icon n="free" s={13} /></Tool>
                            <Tool><Icon n="grad" s={13} /></Tool>
                            <Tool><Icon n="feather" s={13} /></Tool>
                            <Tool $h={18} $corner><Icon n="note" s={12} /></Tool>
                            <Tool $h={16} $corner><Pipette size={12} /></Tool>
                            <Tool><FaHandPaper size={11} /></Tool>
                            <Tool $h={15}><Search size={12} /></Tool>
                            <Tool $h={18}><Icon n="fit4" s={10} /><Icon n="swap" s={9} /></Tool>
                            <Tool $h={19}><Icon n="noteGrid" s={14} /></Tool>
                            <Tool $h={14}><Icon n="fit3" s={9} /><ToolT $size={9} $c="#666">T</ToolT></Tool>
                            <Tool $h={18} $active $corner><FillChip /></Tool>
                            <Tool $h={21} $corner><Icon n="view" s={12} /></Tool>
                            <Tool $h={18} $active $corner><Icon n="feather" s={11} /></Tool>
                        </ToolsCol>
                        <DocCol>
                            <TabStrip>
                                <DocTab><span>×</span>*PRE-field-trip-form.indd @ 125% [GPU Preview]</DocTab>
                            </TabStrip>
                            <HRuler>
                                <RulerCorner />
                                {[0, 1, 2, 3, 4, 5, 6, 7, 8].map((n) => <HCell key={n}>{n}</HCell>)}
                            </HRuler>
                            <DocMain>
                                <VRuler>
                                    <VCell $first />
                                    {[1, 2, 3, 4, 5, 6].map((n) => <VCell key={n}>{n}</VCell>)}
                                </VRuler>
                                <Pasteboard />
                                <Sheet>
                                    <Margins>
                                        <TitleFrame>
                                            <Title>5TH <BigCap>G</BigCap>RADE <BigCap>A</BigCap>NNUAL <BigCap>F</BigCap>IELD <BigCap>T</BigCap>RIPS</Title>
                                        </TitleFrame>
                                        <SubFrame>PARENT PERMISSION SLIP</SubFrame>
                                        <FormRow $mt={42}>
                                            <LabelFrame $w={243}>Parent/Legal Guardian Name:</LabelFrame>
                                            <TextField $w={410} />
                                        </FormRow>
                                        <FormRow $mt={24}>
                                            <LabelFrame $w={122}>Child’s Name:</LabelFrame>
                                            <TextField $w={531} />
                                        </FormRow>
                                        <TripsHeading>Field trips I am giving permission for my child to attend:</TripsHeading>
                                        <ChecksArea>
                                            <CheckHint>Check all that apply:</CheckHint>
                                            <ChecksList>
                                                <CheckRow $h={35}>
                                                    <Box>
                                                        <Check />
                                                        <Selection />
                                                        {HANDLES.map(([x, y]) => <Handle key={x + y} $x={x} $y={y} />)}
                                                        <HandleDot />
                                                    </Box>
                                                    <OptionFrame>Denver Zoo, September ##</OptionFrame>
                                                </CheckRow>
                                                <CheckRow $h={36}>
                                                    <Box>
                                                        <CursorMark width="16" height="18" viewBox="0 0 16 18">
                                                            <path d="M1 1v12l3-3 5-.5z" fill="#000" />
                                                            <rect x="8" y="9" width="2.4" height="2.4" fill="#000" />
                                                        </CursorMark>
                                                    </Box>
                                                    <OptionFrame>Natural History Museum, November ##</OptionFrame>
                                                </CheckRow>
                                                <CheckRow $h={36}>
                                                    <Box />
                                                    <OptionFrame>Play at the Arvada Center, January ##</OptionFrame>
                                                </CheckRow>
                                                <CheckRow $h={33}>
                                                    <Box />
                                                    <OptionFrame>Science in the Park, April ##</OptionFrame>
                                                </CheckRow>
                                                <CheckRow $h={29}>
                                                    <Box />
                                                    <OptionFrame>Annual year-end celebration at the local pool, May ##</OptionFrame>
                                                </CheckRow>
                                            </ChecksList>
                                        </ChecksArea>
                                        <AckRow>
                                            <AckBox><Check s={22} /></AckBox>
                                            <AckFrame>
                                                <AckLine $ls={0.03}>I acknowledge my right change (give or revoke) permission for any and all field</AckLine>
                                                <AckLine $ls={0.15}>trips by contacting my child’s teacher or the school’s front office at any time.</AckLine>
                                            </AckFrame>
                                        </AckRow>
                                        <SigRow>
                                            <SigLine />
                                            <SigCircle />
                                            <SigBox />
                                            <SigCircle />
                                            <SigBox />
                                        </SigRow>
                                    </Margins>
                                </Sheet>
                                <VScroll><ScrollThumb /></VScroll>
                            </DocMain>
                        </DocCol>
                    </LeftMain>
                    <StatusBar>
                        <StatusSlot $w={32}>125% <ChevD /></StatusSlot>
                        <StatusSlot $w={36}>|◂ &nbsp;◂</StatusSlot>
                        <StatusPage>1 <ChevD /></StatusPage>
                        <StatusSlot $w={37}>&nbsp;▸ &nbsp;▸|</StatusSlot>
                        <StatusSlot $w={21}>∩</StatusSlot>
                        <StatusSlot $w={84}>[Basic] (working) &nbsp;&nbsp;<ChevD /></StatusSlot>
                        <StatusSlot $w={50}><GreenDot />No errors <ChevD /></StatusSlot>
                        <StatusSlot $w={235} />
                        <HThumb />
                        <SpreadMark />
                    </StatusBar>
                </Left>
                <Dock>
                    <DockHandle><span>»</span><span>»</span></DockHandle>
                    <DockCols>
                        <PanelCol $w={168}>
                            <PanelTabs>
                                <PropTab $w={54} $on>Properties</PropTab>
                            </PanelTabs>
                            <Section $h={22}>
                                <ShapeName>Rectangle (Form Field)</ShapeName>
                            </Section>
                            <Section $h={71}>
                                <SectionTitle>Transform</SectionTitle>
                                <TransformGrid>
                                    <ProxyCell><ProxyGrid s={17} /></ProxyCell>
                                    <TLabel>X:</TLabel>
                                    <PlainField>1.9 in</PlainField>
                                    <TLabelW>W:</TLabelW>
                                    <PlainField>0.2539 in</PlainField>
                                    <LinkCell><Unlink2 size={11} /></LinkCell>
                                    <TLabel>Y:</TLabel>
                                    <PlainField>3.7922 in</PlainField>
                                    <TLabelW>H:</TLabelW>
                                    <PlainField>0.2539 in</PlainField>
                                </TransformGrid>
                                <More>...</More>
                            </Section>
                            <Section $h={111}>
                                <SectionTitle>Appearance</SectionTitle>
                                <PropRows>
                                    <PropRow $h={17}>
                                        <PropIcon><Unknown>?</Unknown></PropIcon>
                                        <PropLink $plain>Fill</PropLink>
                                    </PropRow>
                                    <PropRow $h={17}>
                                        <PropIcon><Icon n="strokeBox" s={11} /></PropIcon>
                                        <PropLink>Stroke</PropLink>
                                        <NumField $w={46} $dim><Spin dim /><Chev><ChevD /></Chev></NumField>
                                        <SwatchGroup><Swatch $w={24} $h={13}><BlackBar $w={15} /></Swatch><ChevBox $w={11}><ChevD /></ChevBox></SwatchGroup>
                                    </PropRow>
                                    <PropRow $h={18}>
                                        <PropIcon><Icon n="corners" s={11} /></PropIcon>
                                        <PropLink>Corner</PropLink>
                                        <Num w={46} v="0.1667 in" />
                                        <SwatchGroup><Swatch $w={24} $h={13}><CornerMark $w={15} /></Swatch><ChevBox $w={11}><ChevD /></ChevBox></SwatchGroup>
                                    </PropRow>
                                    <PropRow $h={17}>
                                        <PropIcon><Icon n="feather" s={11} /></PropIcon>
                                        <PropLink>Opacity</PropLink>
                                        <NumField $w={46}><span>&nbsp;100%</span><Chev><ChevR /></Chev></NumField>
                                    </PropRow>
                                    <PropRow $h={18}>
                                        <PropIcon><Icon n="frame" s={11} /></PropIcon>
                                        <Fx>fx.</Fx>
                                    </PropRow>
                                </PropRows>
                            </Section>
                            <Section $h={43}>
                                <SectionTitle>Align</SectionTitle>
                                <AlignRow $gap={9}>
                                    <Icon n="dist" /><Icon n="alignL" /><Icon n="alignC" /><Icon n="alignR" /><Icon n="alignT" /><Icon n="alignM" /><Icon n="alignB" />
                                </AlignRow>
                            </Section>
                            <Section $h={53}>
                                <SectionTitle>Text Wrap</SectionTitle>
                                <AlignRow $gap={8}>
                                    <WrapOn><Icon n="wrap0" /></WrapOn><Icon n="wrap1" /><Icon n="wrap2" /><Icon n="wrap3" /><Icon n="wrap4" />
                                    <CheckCell $w={34}><MiniBox /><SmallText $c="#5e5e5e">Invert</SmallText></CheckCell>
                                </AlignRow>
                                <More>...</More>
                            </Section>
                            <Section $h={70} $last>
                                <SectionTitle>Quick Actions</SectionTitle>
                                <ActionBtns>
                                    <ActionBtn>Arrange</ActionBtn>
                                    <ActionBtn>Lock</ActionBtn>
                                    <ActionBtn $wide>Convert Shape</ActionBtn>
                                </ActionBtns>
                            </Section>
                        </PanelCol>
                        <PanelCol>
                            <PanelTabs $mb={2}>
                                <PanelTab $w={40} $on><GripDot />Pages</PanelTab>
                                <PanelMenu />
                            </PanelTabs>
                            <PanelTabs $mb={3}>
                                <PanelTab $w={38} $on><GripDot />Color</PanelTab>
                                <PanelTab $w={38} $ml={7}>Stroke</PanelTab>
                                <PanelTab $w={49}>Swatches</PanelTab>
                                <PanelTab $w={60}>CC Libraries</PanelTab>
                                <PanelTab $w={30}>Layers</PanelTab>
                                <PanelMenu />
                            </PanelTabs>
                            <PanelTabs>
                                <PanelTab $w={89} $on><GripDot />Buttons and Forms</PanelTab>
                                <PanelMenu />
                            </PanelTabs>
                            <FormsBody>
                                <KV><KVLabel>Type:</KVLabel><KVField>Check Box <ChevD /></KVField></KV>
                                <KV><KVLabel>Name:</KVLabel><KVField>Denver Zoo</KVField></KV>
                                <KV><KVLabel>Event:</KVLabel><KVField>On Release or Tap <ChevD /></KVField></KV>
                                <ActionsRow><KVLabel>Actions:</KVLabel><ActionSigns><span>+</span><span>−</span></ActionSigns></ActionsRow>
                                <ActionsBox>[No Actions Added]</ActionsBox>
                                <GroupLabel $mt={6} $mb={5}>Appearance</GroupLabel>
                                <StateList>
                                    <StateRow $on><EyeSlot><Eye size={8} /></EyeSlot><StateChip><Check s={11} /></StateChip>[Normal On]</StateRow>
                                    <StateRow><EyeSlot><Eye size={8} /></EyeSlot><StateChip />[Normal Off]</StateRow>
                                    <StateRow><EyeSlot /><StateChip $blank />[Rollover On]</StateRow>
                                    <StateScroll />
                                </StateList>
                                <CheckLine $mt={5}><MiniBox />Hidden Until Triggered</CheckLine>
                                <GroupLabel $mt={12} $mb={7}>&nbsp;&nbsp;<ChevD />PDF Options</GroupLabel>
                                <GroupLabel $mt={0} $mb={2}>Description:</GroupLabel>
                                <DescField />
                                <CheckLine $mt={6}><CheckCell $w={80}><MiniBox $on><TickMark size={7} strokeWidth={3} /></MiniBox>Printable</CheckCell><CheckCell $w={90}><MiniBox />Read Only</CheckCell></CheckLine>
                                <CheckLine $mt={4}><CheckCell $w={80}><MiniBox />Required</CheckCell><CheckCell $w={90}><MiniBox />Selected by default</CheckCell></CheckLine>
                                <ValueRow><ValueLabel>Button Value:</ValueLabel><ValueInput>Yes</ValueInput></ValueRow>
                                <FootBar>
                                    <FootIcon><Icon n="play" s={10} /></FootIcon>
                                    <FootIcon $ml={124}><Icon n="screen" s={12} /></FootIcon>
                                    <FootIcon $ml={8}><Trash2 size={10} color="#555" /></FootIcon>
                                </FootBar>
                                <SamplePanel>
                                    <PanelTab $w={118} $on><GripDot />Sample Buttons And Forms</PanelTab>
                                    <PanelMenu />
                                </SamplePanel>
                            </FormsBody>
                        </PanelCol>
                    </DockCols>
                </Dock>
            </Body>
        </Win>
    </Screen>
);

export default App;
